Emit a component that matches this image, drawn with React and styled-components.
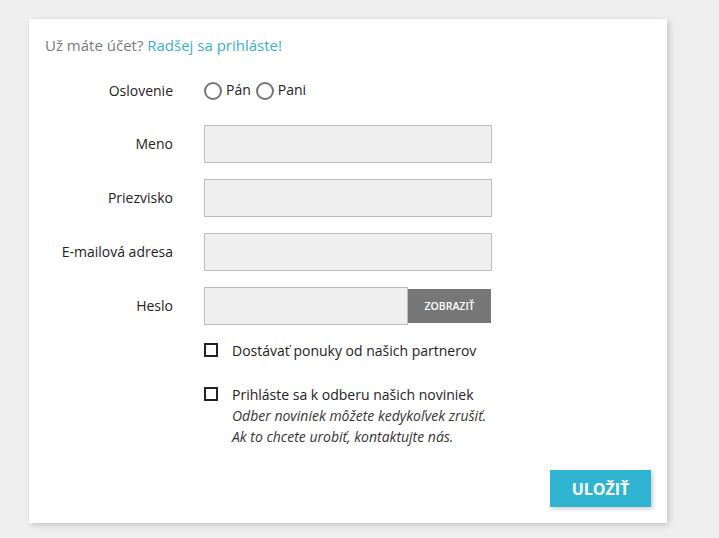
import React from 'react'
import styled, { createGlobalStyle } from 'styled-components'

const Global = createGlobalStyle`
  body {
    margin: 0;
    background: #efefef;
    font-family: "Open Sans", "Noto Sans", sans-serif;
    color: #232323;
  }
`

const Page = styled.div`
  padding: 19px 0 16px 29px;
`

const Card = styled.div`
  width: 638px;
  box-sizing: border-box;
  background: #fff;
  padding: 16px;
  box-shadow: 2px 2px 6px rgba(0, 0, 0, 0.18);
  display: flex;
  flex-direction: column;
`

const Login = styled.p`
  margin: 0;
  font-size: 15px;
  line-height: 20px;
  color: #7a7a7a;
  a {
    color: #3ab0cc;
    text-decoration: none;
  }
`

const Fields = styled.div`
  display: grid;
  grid-template-columns: 128px 288px;
  column-gap: 31px;
  row-gap: 16px;
  margin-top: 18px;
  align-items: center;
`

const Label = styled.label`
  text-align: right;
  font-size: 14px;
  line-height: 20px;
  color: #232323;
`

const Radios = styled.div`
  display: flex;
  align-items: center;
  height: 36px;
  font-size: 14px;
`

const RadioItem = styled.span`
  display: flex;
  align-items: center;
  margin-right: 5px;
  span {
    margin-top: -4px;
    margin-left: 4px;
  }
`

const Circle = styled.i`
  width: 18px;
  height: 18px;
  box-sizing: border-box;
  border: 2px solid #757575;
  border-radius: 50%;
`

const Input = styled.input`
  height: 38px;
  width: ${p => p.$w || '288px'};
  box-sizing: border-box;
  background: #efefef;
  border: 1px solid #bdbdbd;
  outline: none;
  font-family: inherit;
`

const Group = styled.div`
  display: flex;
  align-items: center;
`

const ShowButton = styled.button`
  width: 83px;
  height: 34px;
  border: none;
  background: #777;
  color: #fff;
  font-family: inherit;
  font-size: 10.5px;
  font-weight: 600;
  padding: 0;
`

const Checks = styled.div`
  display: flex;
  flex-direction: column;
  gap: 23px;
  margin: 15px 0 0 159px;
`

const Check = styled.div`
  display: flex;
  align-items: flex-start;
  font-size: 14px;
  line-height: 21px;
`

const Box = styled.i`
  flex: none;
  width: 14px;
  height: 14px;
  box-sizing: border-box;
  border: 2px solid #232323;
  margin: 3px 14px 0 0;
`

const Note = styled.em`
  display: block;
  font-size: 14px;
  line-height: 21px;
  color: #363636;
`

const Footer = styled.div`
  display: flex;
  justify-content: flex-end;
  margin-top: 23px;
`

const Save = styled.button`
  width: 101px;
  height: 37px;
  border: none;
  background: #2fb5d2;
  color: #fff;
  font-family: inherit;
  font-size: 16px;
  font-weight: 700;
  box-shadow: 2px 2px 4px rgba(0, 0, 0, 0.2);
`

export default function App() {
  return (
    <Page>
      <Global />
      <Card>
        <Login>Už máte účet? <a href="#">Radšej sa prihláste!</a></Login>
        <Fields>
          <Label>Oslovenie</Label>
          <Radios>
            <RadioItem><Circle /><span>Pán</span></RadioItem>
            <RadioItem><Circle /><span>Pani</span></RadioItem>
          </Radios>
          <Label>Meno</Label>
          <Input />
          <Label>Priezvisko</Label>
          <Input />
          <Label>E-mailová adresa</Label>
          <Input />
          <Label>Heslo</Label>
          <Group>
            <Input $w="204px" type="password" />
            <ShowButton>ZOBRAZIŤ</ShowButton>
          </Group>
        </Fields>
        <Checks>
          <Check><Box /><span>Dostávať ponuky od našich partnerov</span></Check>
          <Check>
            <Box />
            <div>
              Prihláste sa k odberu našich noviniek
              <Note>Odber noviniek môžete kedykoľvek zrušiť.</Note>
              <Note>Ak to chcete urobiť, kontaktujte nás.</Note>
            </div>
          </Check>
        </Checks>
        <Footer>
          <Save>ULOŽIŤ</Save>
        </Footer>
      </Card>
    </Page>
  )
}
